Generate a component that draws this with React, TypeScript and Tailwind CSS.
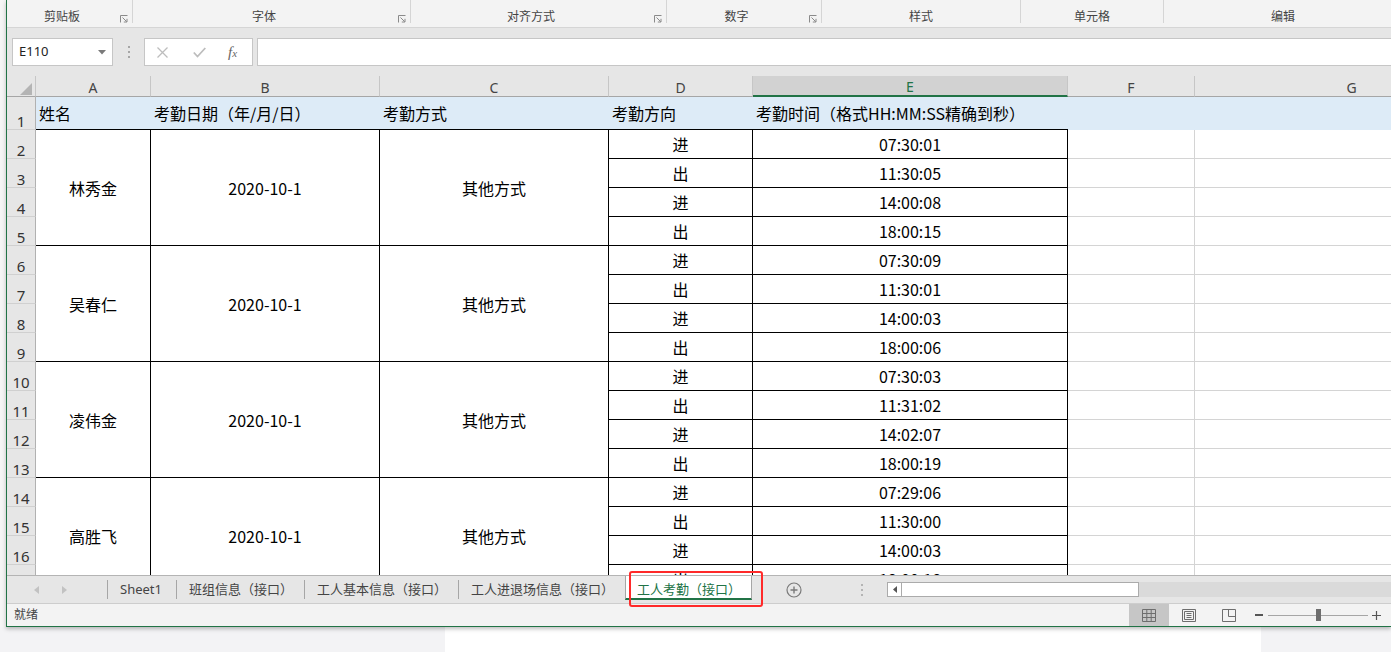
import React from "react";

const UI = "font-['Noto_Sans','Noto_Sans_CJK_SC',sans-serif]";

const people = [
  { name: "林秀金", times: ["07:30:01", "11:30:05", "14:00:08", "18:00:15"] },
  { name: "吴春仁", times: ["07:30:09", "11:30:01", "14:00:03", "18:00:06"] },
  { name: "凌伟金", times: ["07:30:03", "11:31:02", "14:02:07", "18:00:19"] },
  { name: "高胜飞", times: ["07:29:06", "11:30:00", "14:00:03", "18:00:18"] },
];
const dirs = ["进", "出", "进", "出"];

const groups = [
  { label: "剪贴板", w: "w-[126px]", launcher: true, sep: true },
  { label: "字体", w: "w-[278px]", launcher: true, sep: true },
  { label: "对齐方式", w: "w-[256px]", launcher: true, sep: true },
  { label: "数字", w: "w-[155px]", launcher: true, sep: true },
  { label: "样式", w: "w-[199px]", launcher: false, sep: true },
  { label: "单元格", w: "w-[143px]", launcher: false, sep: true },
  { label: "编辑", w: "w-[238px]", launcher: false, sep: false },
];

function Launcher() {
  return (
    <svg width="8" height="8" viewBox="0 0 8 8">
      <path d="M0.5 7.5V0.5H7.5" fill="none" stroke="#8a8a8a" strokeWidth="1" />
      <path d="M2.5 2.5L6.8 6.8M3.8 7H7V3.8" fill="none" stroke="#8a8a8a" strokeWidth="1" />
    </svg>
  );
}

function Ribbon() {
  return (
    <div className="h-[28px] flex-none flex bg-[#f3f3f3] border-b border-[#d5d5d5]">
      {groups.map((g) => (
        <div key={g.label} className={`${g.w} flex-none flex h-full`}>
          <div className="flex-1 text-center text-[12px] leading-[16px] pt-[8px] text-[#444]">{g.label}</div>
          {g.launcher && (
            <div className="w-[15px] flex-none pl-[3px] pt-[15px]">
              <Launcher />
            </div>
          )}
          {g.sep && <div className="w-px h-[23px] bg-[#d5d5d5] flex-none" />}
        </div>
      ))}
    </div>
  );
}

function FormulaBar() {
  return (
    <div className="h-[48px] flex-none flex items-start pt-[10px] bg-[#e6e6e6]">
      <div className="ml-[5px] w-[101px] h-[28px] flex-none bg-white border border-[#c6c6c6] flex items-center justify-between pl-[6px] pr-[6px]">
        <span className={`${UI} text-[13px] text-[#222]`}>E110</span>
        <svg width="8" height="5" viewBox="0 0 8 5">
          <path d="M0 0H8L4 4.5Z" fill="#7a7a7a" />
        </svg>
      </div>
      <div className="w-[31px] h-[28px] flex-none flex flex-col items-center justify-center gap-[3px]">
        <div className="w-[2px] h-[2px] bg-[#a6a6a6]" />
        <div className="w-[2px] h-[2px] bg-[#a6a6a6]" />
        <div className="w-[2px] h-[2px] bg-[#a6a6a6]" />
      </div>
      <div className="w-[109px] h-[28px] flex-none bg-white border border-[#c6c6c6] flex items-center pl-[12px]">
        <svg width="11" height="11" viewBox="0 0 11 11">
          <path d="M0.5 0.5L10.5 10.5M10.5 0.5L0.5 10.5" stroke="#bdbdbd" strokeWidth="1.3" />
        </svg>
        <svg width="13" height="11" viewBox="0 0 13 11" className="ml-[25px]">
          <path d="M0.8 5.5L4.5 9.5L12.3 1" fill="none" stroke="#bdbdbd" strokeWidth="1.8" />
        </svg>
        <span className="ml-[22px] italic font-['Liberation_Serif',serif] text-[15px] leading-none text-[#666]">
          f<span className="text-[11px]">x</span>
        </span>
      </div>
      <div className="ml-[4px] flex-1 h-[28px] bg-white border border-[#c6c6c6] border-r-0" />
    </div>
  );
}

const colLetters = ["A", "B", "C", "D", "E", "F", "G"];

function Grid() {
  const rowHeader =
    `${UI} bg-[#e6e6e6] border-r border-b border-r-[#b1b1b1] border-b-[#d0d0d0] flex items-end justify-center text-[15px] leading-[16px] text-[#333]`;
  const blackCell = "border-r border-b border-black flex items-center justify-center text-[16px] bg-white";
  const grayCell = "border-r border-b border-[#d4d4d4] bg-white";
  const headerCell = "bg-[#ddebf7] border-b border-black flex items-center text-[16px] pl-[3px] whitespace-nowrap";
  const cells: React.ReactNode[] = [];
  people.forEach((p, gi) => {
    for (let r = 0; r < 4; r++) {
      const rowNum = 2 + gi * 4 + r;
      cells.push(
        <div key={`rh${rowNum}`} className={rowHeader}>
          {rowNum}
        </div>
      );
      if (r === 0) {
        cells.push(
          <div key={`a${gi}`} className={`${blackCell} row-span-4`}>
            {p.name}
          </div>,
          <div key={`b${gi}`} className={`${blackCell} row-span-4`}>
            2020-10-1
          </div>,
          <div key={`c${gi}`} className={`${blackCell} row-span-4`}>
            其他方式
          </div>
        );
      }
      cells.push(
        <div key={`d${rowNum}`} className={blackCell}>
          {dirs[r]}
        </div>,
        <div key={`e${rowNum}`} className={blackCell}>
          {p.times[r]}
        </div>,
        <div key={`f${rowNum}`} className={grayCell} />,
        <div key={`g${rowNum}`} className={grayCell} />
      );
    }
  });

  return (
    <div className="h-[499px] flex-none overflow-hidden bg-white">
      <div className="w-max grid grid-cols-[29px_115px_229px_229px_144px_315px_127px_314px] grid-rows-[21px_33px_repeat(16,29px)] font-['Noto_Sans_CJK_SC',sans-serif] text-black">
        <div className="bg-[#e6e6e6] border-r border-b border-r-[#c6c6c6] border-b-[#a6a6a6] relative">
          <svg width="29" height="20" viewBox="0 0 29 20" className="absolute left-0 top-0">
            <path d="M25 7V19H13Z" fill="#b4b4b4" />
          </svg>
        </div>
        {colLetters.map((c) =>
          c === "E" ? (
            <div
              key={c}
              className={`${UI} bg-[#d2d2d2] border-r border-b-2 border-r-[#c6c6c6] border-b-[#217346] flex items-center justify-center pt-[2px] text-[14px] text-[#217346]`}
            >
              {c}
            </div>
          ) : (
            <div
              key={c}
              className={`${UI} bg-[#e6e6e6] border-r border-b border-r-[#c6c6c6] border-b-[#a6a6a6] flex items-center justify-center pt-[2px] text-[14px] text-[#444]`}
            >
              {c}
            </div>
          )
        )}
        <div className={rowHeader}>1</div>
        <div className={headerCell}>姓名</div>
        <div className={headerCell}>考勤日期（年/月/日）</div>
        <div className={headerCell}>考勤方式</div>
        <div className={headerCell}>考勤方向</div>
        <div className={headerCell}>考勤时间（格式HH:MM:SS精确到秒）</div>
        <div className="bg-[#ddebf7]" />
        <div className="bg-[#ddebf7]" />
        {cells}
      </div>
    </div>
  );
}

const tabs = [
  { label: "Sheet1", w: "w-[69px]" },
  { label: "班组信息（接口）", w: "w-[128px]" },
  { label: "工人基本信息（接口）", w: "w-[154px]" },
  { label: "工人进退场信息（接口）", w: "w-[167px]" },
];

function TabBar() {
  return (
    <div className={`${UI} h-[29px] flex-none flex bg-[#e6e6e6] border-t border-b border-t-[#b4b4b4] border-b-[#cdcdcd] relative`}>
      <div className="w-[100px] flex-none flex items-center">
        <svg width="5" height="8" viewBox="0 0 5 8" className="ml-[27px]">
          <path d="M5 0V8L0 4Z" fill="#c2c2c2" />
        </svg>
        <svg width="5" height="8" viewBox="0 0 5 8" className="ml-[23px]">
          <path d="M0 0V8L5 4Z" fill="#c2c2c2" />
        </svg>
      </div>
      {tabs.map((t) => (
        <div key={t.label} className={`${t.w} flex-none flex items-center overflow-hidden`}>
          <div className="w-px h-[19px] bg-[#a6a6a6] flex-none" />
          <span className="pl-[12px] text-[13px] text-[#444] whitespace-nowrap">{t.label}</span>
        </div>
      ))}
      <div className="w-[127px] h-[24px] flex-none bg-white border-l border-r border-[#a6a6a6] border-b-2 border-b-[#217346] flex items-center pl-[11px] pt-[3px] overflow-hidden">
        <span className="text-[13px] leading-[16px] text-[#217346] whitespace-nowrap">工人考勤（接口）</span>
      </div>
      <div className="w-[84px] flex-none flex items-center justify-center">
        <svg width="16" height="16" viewBox="0 0 16 16">
          <circle cx="8" cy="8" r="7" fill="none" stroke="#7a7a7a" strokeWidth="1.2" />
          <path d="M8 4.5V11.5M4.5 8H11.5" stroke="#7a7a7a" strokeWidth="1.4" />
        </svg>
      </div>
      <div className="w-[51px] flex-none flex flex-col items-center justify-center gap-[3px]">
        <div className="w-[2px] h-[2px] bg-[#b4b4b4]" />
        <div className="w-[2px] h-[2px] bg-[#b4b4b4]" />
        <div className="w-[2px] h-[2px] bg-[#b4b4b4]" />
      </div>
      <div className="flex-1 flex items-center">
        <div className="w-[252px] h-[15px] flex-none bg-white border border-[#ababab] flex">
          <div className="w-[14px] h-full border-r border-[#ababab] flex items-center justify-center">
            <svg width="4" height="7" viewBox="0 0 4 7">
              <path d="M4 0V7L0 3.5Z" fill="#555" />
            </svg>
          </div>
        </div>
        <div className="flex-1 h-[15px] bg-[#dadada]" />
      </div>
      <div className="absolute left-[622px] top-[-5px] w-[134px] h-[36px] border-2 border-[#ff2a2a] rounded-[3px]" />
    </div>
  );
}

function StatusBar() {
  return (
    <div className={`${UI} h-[22px] flex-none flex items-center bg-[#f3f3f3]`}>
      <span className="pl-[7px] text-[12px] text-[#444]">就绪</span>
      <div className="flex-1" />
      <div className="w-[40px] h-full bg-[#c6c6c6] flex items-center justify-center">
        <svg width="14" height="13" viewBox="0 0 14 13">
          <path d="M0.5 0.5H13.5V12.5H0.5ZM4.8 0.5V12.5M9.2 0.5V12.5M0.5 4.5H13.5M0.5 8.5H13.5" fill="none" stroke="#6e6e6e" />
        </svg>
      </div>
      <div className="w-[40px] h-full flex items-center justify-center">
        <svg width="14" height="13" viewBox="0 0 14 13">
          <path d="M0.5 0.5H13.5V12.5H0.5Z" fill="none" stroke="#6e6e6e" />
          <path d="M2.5 2.5H11.5V10.5H2.5Z" fill="none" stroke="#6e6e6e" />
          <path d="M4.5 4.5H9.5M4.5 6.5H9.5M4.5 8.5H9.5" stroke="#6e6e6e" />
        </svg>
      </div>
      <div className="w-[40px] h-full flex items-center justify-center">
        <svg width="14" height="13" viewBox="0 0 14 13">
          <path d="M0.5 0.5H13.5V12.5H0.5ZM6.5 0.5V7.5H13.5" fill="none" stroke="#6e6e6e" />
        </svg>
      </div>
      <div className="w-[19px] flex items-center justify-center">
        <div className="w-[8px] h-[1.5px] bg-[#555]" />
      </div>
      <div className="w-[100px] h-[14px] relative flex items-center">
        <div className="w-full h-px bg-[#a6a6a6]" />
        <div className="absolute left-[48px] top-[1px] w-[5px] h-[12px] bg-[#6e6e6e]" />
      </div>
      <div className="w-[16px] flex items-center justify-center">
        <svg width="9" height="9" viewBox="0 0 9 9">
          <path d="M4.5 0V9M0 4.5H9" stroke="#555" strokeWidth="1.2" />
        </svg>
      </div>
      <div className="w-[7px]" />
    </div>
  );
}

export default function App() {
  return (
    <div className="w-[1391px] h-[652px] overflow-hidden bg-[#f5f5f5] font-['Noto_Sans_CJK_SC',sans-serif]">
      <div className="ml-[6px] h-[627px] overflow-hidden border-l border-b border-[#217346] flex flex-col bg-[#e6e6e6] shadow-[0_2px_4px_rgba(0,0,0,0.25)] relative z-10">
        <Ribbon />
        <FormulaBar />
        <Grid />
        <TabBar />
        <StatusBar />
      </div>
      <div className="flex h-[25px]">
        <div className="w-[445px] bg-[#f3f3f5]" />
        <div className="w-[816px] bg-white" />
        <div className="flex-1 bg-[#f3f3f5]" />
      </div>
    </div>
  );
}
